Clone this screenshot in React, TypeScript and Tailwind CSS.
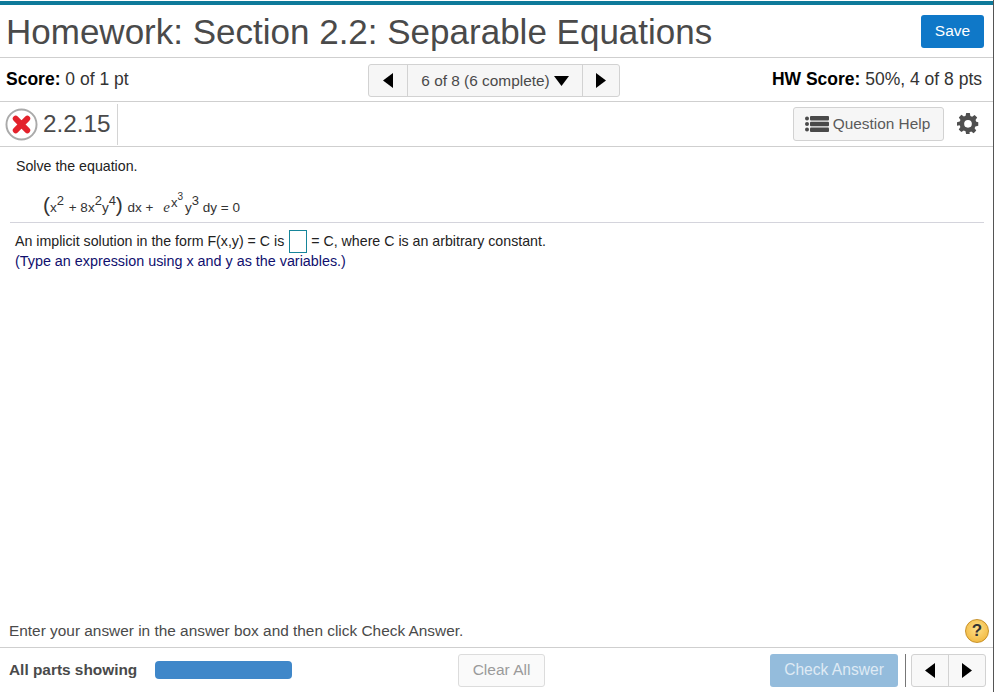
import React from 'react';

function Left() {
  return <svg width="10" height="15" viewBox="0 0 10 15"><path d="M10 0V15L0 7.5Z" fill="#000" /></svg>;
}

function Right() {
  return <svg width="10" height="15" viewBox="0 0 10 15"><path d="M0 0V15L10 7.5Z" fill="#000" /></svg>;
}

function ListIcon() {
  return (
    <svg width="24" height="16" viewBox="0 0 24 16" fill="#4a4a4a">
      <circle cx="2" cy="2.5" r="2" />
      <circle cx="2" cy="8" r="2" />
      <circle cx="2" cy="13.5" r="2" />
      <rect x="5" y="0" width="19" height="4.6" rx="1" />
      <rect x="5" y="5.7" width="19" height="4.6" rx="1" />
      <rect x="5" y="11.4" width="19" height="4.6" rx="1" />
    </svg>
  );
}

function Gear() {
  return (
    <svg width="22" height="22" viewBox="0 0 24 24">
      <path fill="#4f4f4f" fillRule="evenodd" d="M10 1h4l.6 3.2 1.9.8 2.7-1.8 2.8 2.8-1.8 2.7.8 1.9L23.2 11v4l-3.2.6-.8 1.9 1.8 2.7-2.8 2.8-2.7-1.8-1.9.8L13.9 24h-4l-.6-3.2-1.9-.8-2.7 1.8-2.8-2.8 1.8-2.7-.8-1.9L-.2 15v-4l3.2-.6.8-1.9L2 5.8 4.8 3l2.7 1.8 1.9-.8zM12 8.6a4.2 4.2 0 1 0 0 8.4 4.2 4.2 0 0 0 0-8.4z" transform="translate(0 -1)" />
    </svg>
  );
}

function WrongMark() {
  return (
    <svg width="33" height="33" viewBox="0 0 34 34">
      <circle cx="17" cy="17" r="15.5" fill="#fff" stroke="#aaaaaa" strokeWidth="2" />
      <path d="M11 11L23 23M23 11L11 23" stroke="#e3212b" strokeWidth="6" strokeLinecap="round" />
    </svg>
  );
}

function Sup({ children }: { children: React.ReactNode }) {
  return <span className="relative top-[-7px] text-[13px] leading-none">{children}</span>;
}

export default function App() {
  return (
    <div className="relative flex h-[692px] w-[994px] flex-col overflow-hidden bg-white pt-px font-['Liberation_Sans',Arial,sans-serif] text-[#000]">
      <div className="h-1 w-full shrink-0 bg-[#0e7a9a]" />

      <div className="flex h-[53px] shrink-0 items-center justify-between border-b border-[#cfcfcf] pl-[6px] pr-[10px]">
        <h1 className="text-[35px] leading-none font-normal text-[#4a4a4a]">Homework: Section 2.2: Separable Equations</h1>
        <button className="flex h-[33px] w-[63px] items-center justify-center rounded-[3px] bg-[#0f78c8] text-[15.5px] text-white">Save</button>
      </div>

      <div className="flex h-[44px] shrink-0 items-center border-b border-[#cfcfcf] pl-[6px] pr-[6px] text-[17.5px] text-[#1a1a1a]">
        <div className="flex-1"><b className="text-black">Score:</b> <span className="text-[#333]">0 of 1 pt</span></div>
        <div className="mt-[2px] flex h-[33px] w-[252px] items-stretch rounded-[3px] border border-[#d2d2d2] bg-[#f6f6f6]">
          <div className="flex w-[39px] items-center justify-center border-r border-[#d2d2d2]"><Left /></div>
          <div className="flex w-[174px] items-center justify-center gap-[4px] text-[15.4px] text-[#4a4a4a]">
            6 of 8 (6 complete)
            <svg width="15" height="10" viewBox="0 0 15 10"><path d="M0 0H15L7.5 10Z" fill="#000" /></svg>
          </div>
          <div className="flex flex-1 items-center justify-center border-l border-[#d2d2d2]"><Right /></div>
        </div>
        <div className="flex-1 whitespace-nowrap pr-[6px] text-right"><b className="text-black">HW Score:</b> <span className="text-[#333]">50%, 4 of 8 pts</span></div>
      </div>

      <div className="flex h-[45px] shrink-0 items-center justify-between border-b border-[#cfcfcf] pl-[5px] pr-[15px]">
        <div className="flex h-full items-center py-px">
          <WrongMark />
          <span className="ml-[5px] text-[24.3px] leading-none text-[#4a4a4a]">2.2.15</span>
          <div className="ml-[6px] h-[41px] w-px bg-[#d4d4d4]" />
        </div>
        <div className="flex items-center">
          <button className="flex h-[34px] w-[151px] items-center justify-center gap-[4px] rounded-[3px] border border-[#d2d2d2] bg-[#f6f6f6] pr-[2px] text-[15.4px] text-[#5a5a5a]">
            <ListIcon />
            Question Help
          </button>
          <div className="ml-[13px] flex"><Gear /></div>
        </div>
      </div>

      <div className="flex min-h-0 flex-1 flex-col px-[10px] text-[14.2px] text-[#222]">
        <p className="ml-[6px] mt-[11px] leading-4">Solve the equation.</p>
        <div className="ml-[33px] mt-[15px] flex h-[28px] items-baseline whitespace-pre text-[13.5px] leading-[31px] text-[#333]">
          <span className="text-[21px] font-light">(</span>
          <span>x</span><Sup>2</Sup><span className="ml-[1px]"> + 8x</span><Sup>2</Sup><span>y</span><Sup>4</Sup>
          <span className="text-[21px] font-light">)</span>
          <span className="ml-[1px]"> dx + </span>
          <span className="ml-[6px] font-['Liberation_Serif',serif] text-[15px] italic">e</span>
          <span className="relative top-[-5px] ml-[1px] text-[13px] leading-none">x</span>
          <span className="relative top-[-12px] text-[10px] leading-none">3</span>
          <span className="ml-[2px]">y</span><Sup>3</Sup><span> dy = 0</span>
        </div>
        <div className="mt-[5px] h-px w-[974px] bg-[#d4d4dc]" />
        <div className="ml-[5px] mt-[7px] flex h-[23px] items-center">
          An implicit solution in the form F(x,y) = C is
          <span className="ml-[5px] mr-[4px] inline-block h-[23px] w-[18px] border border-[#16859a]" />
          = C, where C is an arbitrary constant.
        </div>
        <p className="ml-[5px] text-[14.35px] leading-[17px] text-[#10106e]">(Type an expression using x and y as the variables.)</p>

        <div className="-mx-px mt-auto mr-[-5px] flex items-center justify-between pb-[4px]">
          <span className="text-[15.4px] text-[#4a4a4a]">Enter your answer in the answer box and then click Check Answer.</span>
          <div className="flex h-[24px] w-[24px] items-center justify-center rounded-full border border-[#c8922a] bg-[radial-gradient(circle_at_50%_40%,#ffe08a,#eeb030)] text-[17px] font-bold text-[#333]">?</div>
        </div>
      </div>

      <div className="flex h-[45px] shrink-0 items-center border-t border-[#cfcfcf] pl-[9px] pr-[8px]">
        <b className="w-[146px] text-[15.4px] text-[#4a4a4a]">All parts showing</b>
        <div className="h-[18px] w-[137px] rounded-[4px] bg-[#3f87c9]" />
        <button className="ml-[166px] h-[33px] w-[87px] rounded-[3px] border border-[#dcdcdc] bg-[#fafafa] text-[15.5px] text-[#9a9a9a]">Clear All</button>
        <button className="ml-auto h-[33px] w-[128px] rounded-[3px] bg-[#94bcdc] text-[15.6px] text-[#dfeaf4]">Check Answer</button>
        <div className="ml-[7px] h-[33px] w-px bg-[#777]" />
        <div className="ml-[5px] flex h-[33px] w-[75px] items-stretch rounded-[3px] border border-[#d2d2d2] bg-[#f8f8f8]">
          <div className="flex w-[37px] items-center justify-center border-r border-[#d2d2d2]"><Left /></div>
          <div className="flex flex-1 items-center justify-center"><Right /></div>
        </div>
      </div>

      <div className="absolute right-0 top-0 h-full w-px bg-[#555]" />
    </div>
  );
}
